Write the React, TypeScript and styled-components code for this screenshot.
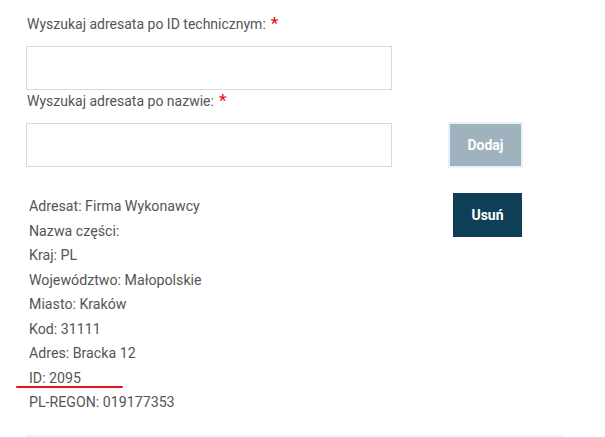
import React from "react";
import styled, { createGlobalStyle } from "styled-components";

const Global = createGlobalStyle`
  html, body { margin: 0; padding: 0; background: #fff; }
  body { font-family: Roboto, "Liberation Sans", Arial, sans-serif; }
`;

const Page = styled.div`
  width: 605px;
  height: 437px;
  box-sizing: border-box;
  padding: 14px 42px 0 26px;
  overflow: hidden;
  position: relative;
`;

const Label = styled.div<{ $gapTop?: number }>`
  font-size: 14px;
  line-height: 20px;
  height: 20px;
  color: #555;
  padding-left: 1px;
  margin-top: ${(p) => p.$gapTop ?? 0}px;
  margin-bottom: 12px;
`;

const Star = styled.span`
  color: #e0101e;
  margin-left: 5px;
  font-size: 17px;
  font-weight: 500;
  line-height: 0;
`;

const Row = styled.div`
  display: flex;
  align-items: flex-start;
`;

const Input = styled.input`
  width: 366px;
  height: 44px;
  box-sizing: border-box;
  border: 1px solid #d9d9d9;
  background: #fff;
  outline: none;
  padding: 0 10px;
  font: inherit;
`;

const Button = styled.button<{ $disabled?: boolean }>`
  font-family: Roboto, "Liberation Sans", Arial, sans-serif;
  font-weight: 700;
  font-size: 14px;
  color: #fff;
  border: ${(p) => (p.$disabled ? "2px solid #e6f2fa" : "none")};
  background: ${(p) => (p.$disabled ? "#9fb2bd" : "#0e3f56")};
  width: ${(p) => (p.$disabled ? "75px" : "69px")};
  height: ${(p) => (p.$disabled ? "46px" : "44px")};
  margin-left: ${(p) => (p.$disabled ? "56px" : "61px")};
  margin-top: -1px;
  padding: 0;
  cursor: pointer;
`;

const InfoRow = styled(Row)`
  margin-top: 26px;
`;

const Info = styled.div`
  width: 366px;
  padding-left: 3px;
  box-sizing: border-box;
  font-size: 14.2px;
  line-height: 24.5px;
  color: #555;
`;

const Line = styled.div`
  position: relative;
`;

const Mark = styled.span`
  position: absolute;
  left: -13px;
  top: 20px;
  width: 107px;
  height: 2px;
  background: #e5121d;
  border-radius: 1px;
`;

const Divider = styled.div`
  margin-top: 20px;
  width: 538px;
  height: 2px;
  background: #f3f3f3;
`;

const info = [
  "Adresat: Firma Wykonawcy",
  "Nazwa części:",
  "Kraj: PL",
  "Województwo: Małopolskie",
  "Miasto: Kraków",
  "Kod: 31111",
  "Adres: Bracka 12",
  "ID: 2095",
  "PL-REGON: 019177353",
];

export default function App() {
  return (
    <Page>
      <Global />
      <Label>
        Wyszukaj adresata po ID technicznym:<Star>*</Star>
      </Label>
      <Input />
      <Label $gapTop={1}>
        Wyszukaj adresata po nazwie:<Star>*</Star>
      </Label>
      <Row>
        <Input />
        <Button $disabled>Dodaj</Button>
      </Row>
      <InfoRow>
        <Info>
          {info.map((t) => (
            <Line key={t}>
              {t}
              {t.startsWith("ID:") && <Mark />}
            </Line>
          ))}
        </Info>
        <Button>Usuń</Button>
      </InfoRow>
      <Divider />
    </Page>
  );
}
